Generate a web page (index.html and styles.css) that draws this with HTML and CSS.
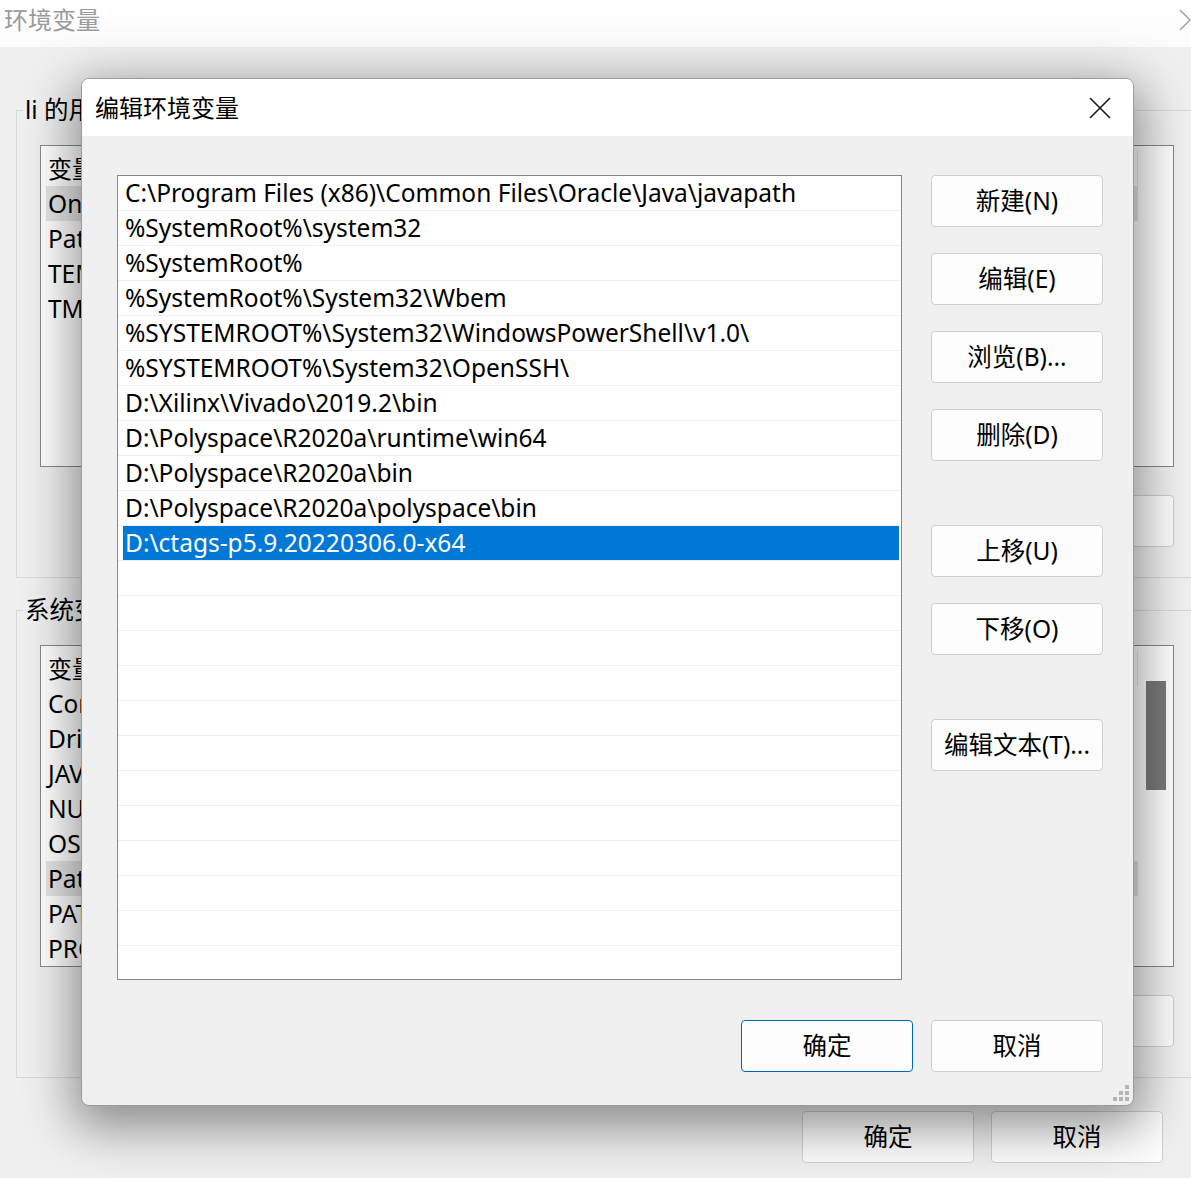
FILE: index.html
```html
<!DOCTYPE html>
<html lang="zh-CN">
<head>
<meta charset="utf-8">
<title>编辑环境变量</title>
<link rel="stylesheet" href="styles.css">
</head>
<body>
<div class="bgwin">
  <div class="bg-titlebar">
    <span class="bg-title">环境变量</span>
    <svg class="chev" width="12" height="22" viewBox="0 0 12 22"><polyline points="1,1 11,11 1,21" fill="none" stroke="#9a9a9a" stroke-width="1.4"/></svg>
  </div>
  <div class="bg-body">
    <fieldset class="group">
      <legend>li 的用户变量(U)</legend>
      <div class="group-inner">
        <div class="lv">
          <div class="lv-main">
            <div class="lv-head">变量</div>
            <div class="lv-row sel"><span>OneDrive</span></div>
            <div class="lv-row"><span>Path</span></div>
            <div class="lv-row"><span>TEMP</span></div>
            <div class="lv-row"><span>TMP</span></div>
          </div>
          <div class="lv-scroll"></div>
        </div>
        <div class="grp-btns">
          <button class="btn">新建(N)...</button>
          <button class="btn">编辑(E)...</button>
          <button class="btn">删除(D)</button>
        </div>
      </div>
    </fieldset>
    <fieldset class="group group2">
      <legend>系统变量(S)</legend>
      <div class="group-inner">
        <div class="lv">
          <div class="lv-main">
            <div class="lv-head">变量</div>
            <div class="lv-row"><span>ComSpec</span></div>
            <div class="lv-row"><span>DriverData</span></div>
            <div class="lv-row"><span>JAVA_HOME</span></div>
            <div class="lv-row"><span>NUMBER_OF_PROCESSORS</span></div>
            <div class="lv-row"><span>OS</span></div>
            <div class="lv-row sel"><span>Path</span></div>
            <div class="lv-row"><span>PATHEXT</span></div>
            <div class="lv-row"><span>PROCESSOR_ARCHITECTURE</span></div>
          </div>
          <div class="lv-scroll"><div class="thumb"></div></div>
        </div>
        <div class="grp-btns">
          <button class="btn">新建(W)...</button>
          <button class="btn">编辑(I)...</button>
          <button class="btn">删除(L)</button>
        </div>
      </div>
    </fieldset>
    <div class="bg-foot">
      <button class="btn">确定</button>
      <button class="btn">取消</button>
    </div>
  </div>
</div>

<div class="dialog">
  <div class="dlg-title">
    <span class="dlg-title-text">编辑环境变量</span>
    <svg class="close" width="22" height="22" viewBox="0 0 22 22"><path d="M1 1 L21 21 M21 1 L1 21" stroke="#1a1a1a" stroke-width="1.6" fill="none"/></svg>
  </div>
  <div class="dlg-body">
    <div class="elist">
      <div class="erow"><span class="t">C:\Program Files (x86)\Common Files\Oracle\Java\javapath</span></div>
      <div class="erow"><span class="t">%SystemRoot%\system32</span></div>
      <div class="erow"><span class="t">%SystemRoot%</span></div>
      <div class="erow"><span class="t">%SystemRoot%\System32\Wbem</span></div>
      <div class="erow"><span class="t">%SYSTEMROOT%\System32\WindowsPowerShell\v1.0\</span></div>
      <div class="erow"><span class="t">%SYSTEMROOT%\System32\OpenSSH\</span></div>
      <div class="erow"><span class="t">D:\Xilinx\Vivado\2019.2\bin</span></div>
      <div class="erow"><span class="t">D:\Polyspace\R2020a\runtime\win64</span></div>
      <div class="erow"><span class="t">D:\Polyspace\R2020a\bin</span></div>
      <div class="erow"><span class="t">D:\Polyspace\R2020a\polyspace\bin</span></div>
      <div class="erow sel"><span class="t">D:\ctags-p5.9.20220306.0-x64</span></div>
      <div class="erow"><span class="t"></span></div>
      <div class="erow"><span class="t"></span></div>
      <div class="erow"><span class="t"></span></div>
      <div class="erow"><span class="t"></span></div>
      <div class="erow"><span class="t"></span></div>
      <div class="erow"><span class="t"></span></div>
      <div class="erow"><span class="t"></span></div>
      <div class="erow"><span class="t"></span></div>
      <div class="erow"><span class="t"></span></div>
      <div class="erow"><span class="t"></span></div>
      <div class="erow"><span class="t"></span></div>
      <div class="erow"><span class="t"></span></div>
      <div class="erow"><span class="t"></span></div>
    </div>
    <div class="side">
      <button class="btn">新建(N)</button>
      <button class="btn">编辑(E)</button>
      <button class="btn">浏览(B)...</button>
      <button class="btn">删除(D)</button>
      <button class="btn gap-lg">上移(U)</button>
      <button class="btn">下移(O)</button>
      <button class="btn gap-lg">编辑文本(T)...</button>
    </div>
  </div>
  <div class="dlg-foot">
    <button class="btn primary">确定</button>
    <button class="btn">取消</button>
  </div>
  <svg class="grip" width="16" height="16" viewBox="0 0 16 16" fill="#b5b5b5">
    <rect x="12" y="0" width="4" height="4"/>
    <rect x="6" y="6" width="4" height="4"/>
    <rect x="12" y="6" width="4" height="4"/>
    <rect x="0" y="12" width="4" height="4"/>
    <rect x="6" y="12" width="4" height="4"/>
    <rect x="12" y="12" width="4" height="4"/>
  </svg>
</div>
</body>
</html>
```
FILE: styles.css
```css
* { box-sizing: border-box; }
html, body { margin: 0; padding: 0; }
body {
  width: 1191px;
  height: 1178px;
  overflow: hidden;
  position: relative;
  background: #f0f0f0;
  font-family: "Segoe UI", "Noto Sans", "Noto Sans CJK SC", sans-serif;
  font-size: 24.5px;
  color: #000;
}

/* ---------- background window ---------- */
.bgwin { width: 1214px; }
.bg-titlebar {
  width: 1191px;
  height: 47px;
  background: linear-gradient(#ffffff, #fbfbfb);
  display: flex;
  align-items: flex-start;
  justify-content: space-between;
  padding: 3px 0 0 4px;
}
.bg-title {
  font-size: 24px;
  line-height: 32px;
  color: #9b9b9b;
  font-family: "Noto Sans CJK SC", sans-serif;
}
.chev { margin-top: 6px; }

.bg-body { padding: 47px 16px 0; }
.group {
  margin: 0;
  min-width: 0;
  border: 1px solid #d8d8d8;
  padding: 19px 0 30px 0;
}
.group legend {
  margin-left: 6px;
  padding: 0 2px;
  font-size: 24.5px;
  line-height: 32px;
}
.group2 { margin-top: 16px; }
.group-inner { padding: 0 23px; }

.lv {
  height: 322px;
  border: 1px solid #828790;
  background: #fff;
  display: flex;
  overflow: hidden;
}
.lv-main { flex: 1; padding-top: 5px; min-width: 0; }
.lv-head {
  height: 35px;
  line-height: 33px;
  padding-left: 7px;
  border-right: 1px solid #e5e5e5;
  font-family: "Noto Sans CJK SC", sans-serif;
  font-size: 24px;
}
.lv-row { height: 35px; white-space: nowrap; overflow: hidden; }
.lv-row span { display: block; height: 35px; line-height: 35px; padding-left: 7px; }
.lv-row.sel span { background: #e5e5e5; margin-left: 5px; padding-left: 2px; }
.lv-scroll { width: 35px; flex: none; }
.thumb { margin: 35px 0 0 8px; width: 20px; height: 109px; background: #7a7a7a; }

.grp-btns {
  margin-top: 28px;
  display: flex;
  justify-content: flex-end;
  gap: 17px;
}
.bg-foot {
  margin-top: 33px;
  padding-right: 35px;
  display: flex;
  justify-content: flex-end;
  gap: 17px;
}

.btn {
  width: 172px;
  height: 52px;
  padding: 0 0 3px;
  background: #fdfdfd;
  border: 1px solid #d0d0d0;
  border-radius: 4px;
  font-family: "Segoe UI", "Noto Sans", "Noto Sans CJK SC", sans-serif;
  font-size: 24.5px;
  color: #000;
  white-space: nowrap;
}

/* ---------- dialog ---------- */
.dialog {
  position: absolute;
  left: 81px;
  top: 78px;
  width: 1053px;
  height: 1028px;
  background: #f0f0f0;
  border: 1px solid #9b9b9b;
  border-radius: 8px;
  box-shadow: 0 14px 50px 8px rgba(0, 0, 0, 0.42);
  overflow: hidden;
  display: flex;
  flex-direction: column;
}
.dlg-title {
  height: 57px;
  flex: none;
  background: #fff;
  display: flex;
  align-items: center;
  justify-content: space-between;
  padding: 0 22px 3px 13px;
  font-family: "Noto Sans CJK SC", sans-serif;
  font-size: 24px;
}
.close { margin-top: 3px; }
.dlg-body {
  padding: 39px 30px 0 35px;
  display: flex;
  gap: 29px;
  align-items: flex-start;
}
.elist {
  width: 785px;
  height: 805px;
  flex: none;
  background: #fff;
  border: 1px solid #828790;
  overflow: hidden;
}
.erow { height: 35px; border-bottom: 1px solid #f0f0f0; }
.erow .t {
  display: block;
  height: 34px;
  line-height: 34px;
  margin: 0 2px 0 5px;
  padding-left: 2px;
  white-space: nowrap;
}
.erow.sel .t { background: #0078d7; color: #fff; }

.side { width: 172px; display: flex; flex-direction: column; gap: 26px; }
.side .gap-lg { margin-top: 38px; }

.dlg-foot {
  padding: 40px 30px 0;
  display: flex;
  justify-content: flex-end;
  gap: 18px;
}
.btn.primary { border-color: #0067c0; }

.grip { position: absolute; right: 4px; bottom: 4px; }
```
